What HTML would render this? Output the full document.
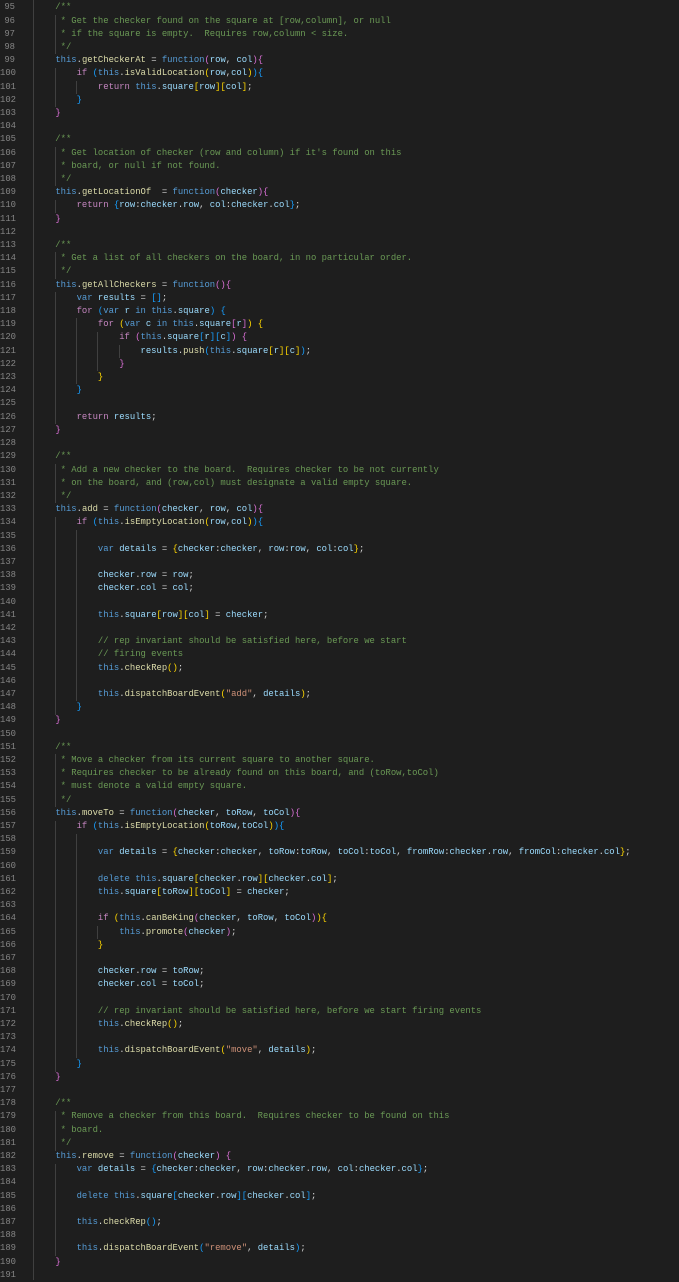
<!DOCTYPE html>
<html><head><meta charset="utf-8"><style>
html,body{margin:0;padding:0;background:#1e1e1e;width:679px;height:1280px;overflow:hidden}
#g{position:absolute;left:0;top:1.4px;width:15px;text-align:right;font:8.9px/13.21px "Liberation Mono",monospace;color:#858585;white-space:pre}
#c{position:absolute;left:34px;top:1.4px;font:8.9px/13.21px "Liberation Mono",monospace;color:#d4d4d4;white-space:pre;margin:0}
.gd{position:absolute;width:1px;background:#404040}
.k{color:#569cd6}.c{color:#c586c0}.f{color:#dcdcaa}.v{color:#9cdcfe}.m{color:#6a9955}.s{color:#ce9178}
.G{color:#ffd700}.P{color:#da70d6}.B{color:#179fff}
</style></head><body>
<div class="gd" style="left:33px;top:0;height:1280px"></div>
<div class="gd" style="left:55px;top:14.6px;height:39.6px"></div>
<div class="gd" style="left:55px;top:67.5px;height:39.6px"></div>
<div class="gd" style="left:76px;top:80.7px;height:13.2px"></div>
<div class="gd" style="left:55px;top:146.7px;height:39.6px"></div>
<div class="gd" style="left:55px;top:199.5px;height:13.2px"></div>
<div class="gd" style="left:55px;top:252.4px;height:26.4px"></div>
<div class="gd" style="left:55px;top:292px;height:132.1px"></div>
<div class="gd" style="left:76px;top:318.4px;height:66px"></div>
<div class="gd" style="left:97px;top:331.6px;height:39.6px"></div>
<div class="gd" style="left:119px;top:344.8px;height:13.2px"></div>
<div class="gd" style="left:55px;top:463.8px;height:39.6px"></div>
<div class="gd" style="left:55px;top:516.6px;height:198.2px"></div>
<div class="gd" style="left:76px;top:529.8px;height:171.7px"></div>
<div class="gd" style="left:55px;top:754.4px;height:52.8px"></div>
<div class="gd" style="left:55px;top:820.5px;height:251px"></div>
<div class="gd" style="left:76px;top:833.7px;height:224.6px"></div>
<div class="gd" style="left:97px;top:926.2px;height:13.2px"></div>
<div class="gd" style="left:55px;top:1111px;height:39.6px"></div>
<div class="gd" style="left:55px;top:1163.9px;height:92.5px"></div>
<div id="g">95
96
97
98
99
100
101
102
103
104
105
106
107
108
109
110
111
112
113
114
115
116
117
118
119
120
121
122
123
124
125
126
127
128
129
130
131
132
133
134
135
136
137
138
139
140
141
142
143
144
145
146
147
148
149
150
151
152
153
154
155
156
157
158
159
160
161
162
163
164
165
166
167
168
169
170
171
172
173
174
175
176
177
178
179
180
181
182
183
184
185
186
187
188
189
190
191</div>
<pre id="c"><span class="m">    /**
     * Get the checker found on the square at [row,column], or null
     * if the square is empty.  Requires row,column &lt; size.
     */</span>
    <span class="k">this</span>.<span class="f">getCheckerAt</span> = <span class="k">function</span><span class="P">(</span><span class="v">row</span>, <span class="v">col</span><span class="P">){</span>
        <span class="c">if</span> <span class="B">(</span><span class="k">this</span>.<span class="f">isValidLocation</span><span class="G">(</span><span class="v">row</span>,<span class="v">col</span><span class="G">)</span><span class="B">){</span>
            <span class="c">return</span> <span class="k">this</span>.<span class="v">square</span><span class="G">[</span><span class="v">row</span><span class="G">][</span><span class="v">col</span><span class="G">]</span>;
        <span class="B">}</span>
    <span class="P">}</span>

<span class="m">    /**
     * Get location of checker (row and column) if it's found on this
     * board, or null if not found.
     */</span>
    <span class="k">this</span>.<span class="f">getLocationOf</span>  = <span class="k">function</span><span class="P">(</span><span class="v">checker</span><span class="P">){</span>
        <span class="c">return</span> <span class="B">{</span><span class="v">row</span>:<span class="v">checker</span>.<span class="v">row</span>, <span class="v">col</span>:<span class="v">checker</span>.<span class="v">col</span><span class="B">}</span>;
    <span class="P">}</span>

<span class="m">    /**
     * Get a list of all checkers on the board, in no particular order.
     */</span>
    <span class="k">this</span>.<span class="f">getAllCheckers</span> = <span class="k">function</span><span class="P">(){</span>
        <span class="k">var</span> <span class="v">results</span> = <span class="B">[]</span>;
        <span class="c">for</span> <span class="B">(</span><span class="k">var</span> <span class="v">r</span> <span class="k">in</span> <span class="k">this</span>.<span class="v">square</span><span class="B">)</span> <span class="B">{</span>
            <span class="c">for</span> <span class="G">(</span><span class="k">var</span> <span class="v">c</span> <span class="k">in</span> <span class="k">this</span>.<span class="v">square</span><span class="P">[</span><span class="v">r</span><span class="P">]</span><span class="G">)</span> <span class="G">{</span>
                <span class="c">if</span> <span class="P">(</span><span class="k">this</span>.<span class="v">square</span><span class="B">[</span><span class="v">r</span><span class="B">][</span><span class="v">c</span><span class="B">]</span><span class="P">)</span> <span class="P">{</span>
                    <span class="v">results</span>.<span class="f">push</span><span class="B">(</span><span class="k">this</span>.<span class="v">square</span><span class="G">[</span><span class="v">r</span><span class="G">][</span><span class="v">c</span><span class="G">]</span><span class="B">)</span>;
                <span class="P">}</span>
            <span class="G">}</span>
        <span class="B">}</span>

        <span class="c">return</span> <span class="v">results</span>;
    <span class="P">}</span>

<span class="m">    /**
     * Add a new checker to the board.  Requires checker to be not currently
     * on the board, and (row,col) must designate a valid empty square.
     */</span>
    <span class="k">this</span>.<span class="f">add</span> = <span class="k">function</span><span class="P">(</span><span class="v">checker</span>, <span class="v">row</span>, <span class="v">col</span><span class="P">){</span>
        <span class="c">if</span> <span class="B">(</span><span class="k">this</span>.<span class="f">isEmptyLocation</span><span class="G">(</span><span class="v">row</span>,<span class="v">col</span><span class="G">)</span><span class="B">){</span>

            <span class="k">var</span> <span class="v">details</span> = <span class="G">{</span><span class="v">checker</span>:<span class="v">checker</span>, <span class="v">row</span>:<span class="v">row</span>, <span class="v">col</span>:<span class="v">col</span><span class="G">}</span>;

            <span class="v">checker</span>.<span class="v">row</span> = <span class="v">row</span>;
            <span class="v">checker</span>.<span class="v">col</span> = <span class="v">col</span>;

            <span class="k">this</span>.<span class="v">square</span><span class="G">[</span><span class="v">row</span><span class="G">][</span><span class="v">col</span><span class="G">]</span> = <span class="v">checker</span>;

<span class="m">            // rep invariant should be satisfied here, before we start
            // firing events</span>
            <span class="k">this</span>.<span class="f">checkRep</span><span class="G">()</span>;

            <span class="k">this</span>.<span class="f">dispatchBoardEvent</span><span class="G">(</span><span class="s">"add"</span>, <span class="v">details</span><span class="G">)</span>;
        <span class="B">}</span>
    <span class="P">}</span>

<span class="m">    /**
     * Move a checker from its current square to another square.
     * Requires checker to be already found on this board, and (toRow,toCol)
     * must denote a valid empty square.
     */</span>
    <span class="k">this</span>.<span class="f">moveTo</span> = <span class="k">function</span><span class="P">(</span><span class="v">checker</span>, <span class="v">toRow</span>, <span class="v">toCol</span><span class="P">){</span>
        <span class="c">if</span> <span class="B">(</span><span class="k">this</span>.<span class="f">isEmptyLocation</span><span class="G">(</span><span class="v">toRow</span>,<span class="v">toCol</span><span class="G">)</span><span class="B">){</span>

            <span class="k">var</span> <span class="v">details</span> = <span class="G">{</span><span class="v">checker</span>:<span class="v">checker</span>, <span class="v">toRow</span>:<span class="v">toRow</span>, <span class="v">toCol</span>:<span class="v">toCol</span>, <span class="v">fromRow</span>:<span class="v">checker</span>.<span class="v">row</span>, <span class="v">fromCol</span>:<span class="v">checker</span>.<span class="v">col</span><span class="G">}</span>;

            <span class="k">delete</span> <span class="k">this</span>.<span class="v">square</span><span class="G">[</span><span class="v">checker</span>.<span class="v">row</span><span class="G">][</span><span class="v">checker</span>.<span class="v">col</span><span class="G">]</span>;
            <span class="k">this</span>.<span class="v">square</span><span class="G">[</span><span class="v">toRow</span><span class="G">][</span><span class="v">toCol</span><span class="G">]</span> = <span class="v">checker</span>;

            <span class="c">if</span> <span class="G">(</span><span class="k">this</span>.<span class="f">canBeKing</span><span class="P">(</span><span class="v">checker</span>, <span class="v">toRow</span>, <span class="v">toCol</span><span class="P">)</span><span class="G">){</span>
                <span class="k">this</span>.<span class="f">promote</span><span class="P">(</span><span class="v">checker</span><span class="P">)</span>;
            <span class="G">}</span>

            <span class="v">checker</span>.<span class="v">row</span> = <span class="v">toRow</span>;
            <span class="v">checker</span>.<span class="v">col</span> = <span class="v">toCol</span>;

<span class="m">            // rep invariant should be satisfied here, before we start firing events</span>
            <span class="k">this</span>.<span class="f">checkRep</span><span class="G">()</span>;

            <span class="k">this</span>.<span class="f">dispatchBoardEvent</span><span class="G">(</span><span class="s">"move"</span>, <span class="v">details</span><span class="G">)</span>;
        <span class="B">}</span>
    <span class="P">}</span>

<span class="m">    /**
     * Remove a checker from this board.  Requires checker to be found on this
     * board.
     */</span>
    <span class="k">this</span>.<span class="f">remove</span> = <span class="k">function</span><span class="P">(</span><span class="v">checker</span><span class="P">)</span> <span class="P">{</span>
        <span class="k">var</span> <span class="v">details</span> = <span class="B">{</span><span class="v">checker</span>:<span class="v">checker</span>, <span class="v">row</span>:<span class="v">checker</span>.<span class="v">row</span>, <span class="v">col</span>:<span class="v">checker</span>.<span class="v">col</span><span class="B">}</span>;

        <span class="k">delete</span> <span class="k">this</span>.<span class="v">square</span><span class="B">[</span><span class="v">checker</span>.<span class="v">row</span><span class="B">][</span><span class="v">checker</span>.<span class="v">col</span><span class="B">]</span>;

        <span class="k">this</span>.<span class="f">checkRep</span><span class="B">()</span>;

        <span class="k">this</span>.<span class="f">dispatchBoardEvent</span><span class="B">(</span><span class="s">"remove"</span>, <span class="v">details</span><span class="B">)</span>;
    <span class="P">}</span>
</pre>
</body></html>
